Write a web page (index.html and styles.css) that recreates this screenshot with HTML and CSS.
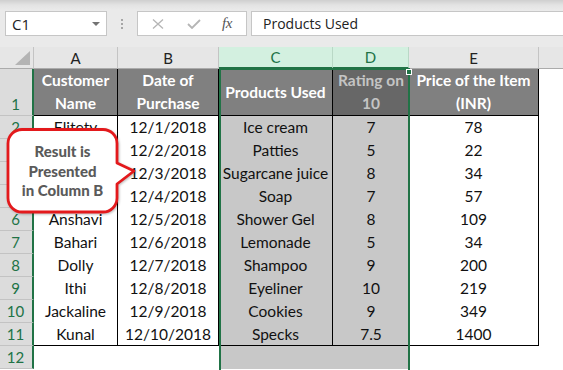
FILE: index.html
```html
<!DOCTYPE html>
<html>
<head>
<meta charset="utf-8">
<link rel="stylesheet" href="styles.css">
</head>
<body>
<div class="app">
  <div class="topbar">
    <div class="namebox"><span>C1</span><span class="dropdown"></span></div>
    <div class="grip"><i></i><i></i><i></i></div>
    <div class="fxbox">
      <svg class="ico-x" width="12" height="10" viewBox="0 0 12 10"><path d="M1 0.5 L11 9.5 M11 0.5 L1 9.5" stroke="#b5b5b5" stroke-width="1.3" fill="none"/></svg>
      <svg class="ico-check" width="14" height="10" viewBox="0 0 14 10"><path d="M1 5 L5 9 L13 1" stroke="#b5b5b5" stroke-width="1.8" fill="none"/></svg>
      <span class="fx">fx</span>
    </div>
    <div class="formula">Products Used</div>
  </div>

  <div class="sheet">
    <div class="ch corner"><span class="tri"></span></div>
    <div class="ch">A</div>
    <div class="ch">B</div>
    <div class="ch sel">C</div>
    <div class="ch sel">D</div>
    <div class="ch">E</div>
    <div class="ch last"></div>

    <div class="rh">1</div>
    <div class="c hd bl bb">Customer<br>Name</div>
    <div class="c hd bl bb">Date of<br>Purchase</div>
    <div class="c hd bl bb">Products Used</div>
    <div class="c hd dim bb">Rating on<br>10</div>
    <div class="c hd bl bb">Price of the Item<br>(INR)</div>
    <div class="c"></div>

    <div class="rh">2</div>
    <div class="c bl">Elitety</div>
    <div class="c bl">12/1/2018</div>
    <div class="c g bl">Ice cream</div>
    <div class="c g">7</div>
    <div class="c bl">78</div>
    <div class="c"></div>

    <div class="rh">3</div>
    <div class="c bl"></div>
    <div class="c bl">12/2/2018</div>
    <div class="c g bl">Patties</div>
    <div class="c g">5</div>
    <div class="c bl">22</div>
    <div class="c"></div>

    <div class="rh">4</div>
    <div class="c bl"></div>
    <div class="c bl">12/3/2018</div>
    <div class="c g bl">Sugarcane juice</div>
    <div class="c g">8</div>
    <div class="c bl">34</div>
    <div class="c"></div>

    <div class="rh">5</div>
    <div class="c bl"></div>
    <div class="c bl">12/4/2018</div>
    <div class="c g bl">Soap</div>
    <div class="c g">7</div>
    <div class="c bl">57</div>
    <div class="c"></div>

    <div class="rh">6</div>
    <div class="c bl">Anshavi</div>
    <div class="c bl">12/5/2018</div>
    <div class="c g bl">Shower Gel</div>
    <div class="c g">8</div>
    <div class="c bl">109</div>
    <div class="c"></div>

    <div class="rh">7</div>
    <div class="c bl">Bahari</div>
    <div class="c bl">12/6/2018</div>
    <div class="c g bl">Lemonade</div>
    <div class="c g">5</div>
    <div class="c bl">34</div>
    <div class="c"></div>

    <div class="rh">8</div>
    <div class="c bl">Dolly</div>
    <div class="c bl">12/7/2018</div>
    <div class="c g bl">Shampoo</div>
    <div class="c g">9</div>
    <div class="c bl">200</div>
    <div class="c"></div>

    <div class="rh">9</div>
    <div class="c bl">Ithi</div>
    <div class="c bl">12/8/2018</div>
    <div class="c g bl">Eyeliner</div>
    <div class="c g">10</div>
    <div class="c bl">219</div>
    <div class="c"></div>

    <div class="rh">10</div>
    <div class="c bl">Jackaline</div>
    <div class="c bl">12/9/2018</div>
    <div class="c g bl">Cookies</div>
    <div class="c g">9</div>
    <div class="c bl">349</div>
    <div class="c"></div>

    <div class="rh">11</div>
    <div class="c bl bb">Kunal</div>
    <div class="c bl bb">12/10/2018</div>
    <div class="c g bl bb">Specks</div>
    <div class="c g bb">7.5</div>
    <div class="c bl bb">1400</div>
    <div class="c"></div>

    <div class="rh">12</div>
    <div class="c"></div>
    <div class="c"></div>
    <div class="c g"></div>
    <div class="c g"></div>
    <div class="c"></div>
    <div class="c"></div>
  </div>

  <div class="selection"><span class="handle"></span></div>

  <div class="callout">
    <svg class="bubble" width="150" height="230" viewBox="0 0 150 230">
      <path d="M22 129.5 H103 A14 14 0 0 1 117 143.5 V163 L134 171 L117 184 V198 A14 14 0 0 1 103 212 H22 A14 14 0 0 1 8 198 V143.5 A14 14 0 0 1 22 129.5 Z" fill="#ffffff" stroke="#e3191c" stroke-width="2.8" stroke-linejoin="round"/>
    </svg>
    <div class="callout-text">Result is<br>Presented<br>in Column B</div>
  </div>
</div>
</body>
</html>
```

FILE: styles.css
```css
html, body {
  margin: 0;
  padding: 0;
}
body {
  width: 563px;
  height: 370px;
  overflow: hidden;
  background: #ffffff;
  font-family: Lato, "Liberation Sans", sans-serif;
}
.app {
  position: relative;
  width: 563px;
  height: 370px;
  overflow: hidden;
}

/* ---------- formula bar ---------- */
.topbar {
  height: 47px;
  box-sizing: border-box;
  padding-top: 11px;
  display: flex;
  align-items: flex-start;
  background: linear-gradient(#cfcfcf 0px, #e3e3e3 5px, #eaeaea 10px, #eaeaea 100%);
}
.namebox {
  margin-left: 5px;
  width: 102px;
  height: 25px;
  box-sizing: border-box;
  border: 1px solid #c6c6c6;
  background: #fff;
  display: flex;
  align-items: center;
  justify-content: space-between;
  padding: 0 6px 0 6px;
  font: 15px "Open Sans", sans-serif;
  color: #222;
}
.dropdown {
  width: 0;
  height: 0;
  border-left: 4px solid transparent;
  border-right: 4px solid transparent;
  border-top: 4px solid #737373;
}
.grip {
  width: 30px;
  display: flex;
  flex-direction: column;
  align-items: center;
  gap: 2px;
  padding-top: 8px;
}
.grip i {
  display: block;
  width: 2px;
  height: 2px;
  background: #a6a6a6;
}
.fxbox {
  width: 110px;
  height: 25px;
  box-sizing: border-box;
  border: 1px solid #c6c6c6;
  background: #fff;
  display: flex;
  align-items: center;
  padding-left: 14px;
}
.ico-x { margin-right: 23px; }
.ico-check { margin-right: 21px; }
.fx {
  font: italic 15px "Liberation Serif", serif;
  color: #555;
  letter-spacing: -0.5px;
}
.formula {
  margin-left: 4px;
  flex: 1;
  height: 25px;
  box-sizing: border-box;
  border: 1px solid #c6c6c6;
  border-right: none;
  background: #fff;
  padding-left: 11px;
  font: 14px "Open Sans", sans-serif;
  line-height: 23px;
  color: #222;
}

/* ---------- sheet grid ---------- */
.sheet {
  display: grid;
  grid-template-columns: 34px 84px 101px 114px 76px 130px 24px;
  grid-template-rows: 22px 47px repeat(10, 23px) 23px 23px;
  font-size: 15.5px;
  color: #111;
}
.ch {
  background: #e6e6e6;
  border-right: 1px solid #c4c4c4;
  border-bottom: 1px solid #ababab;
  display: flex;
  align-items: center;
  justify-content: center;
  font-size: 15px;
  color: #222;
  box-sizing: border-box;
}
.ch.sel {
  background: #d3f0e0;
  color: #217346;
  border-bottom: 2px solid #217346;
  border-right-color: #b9d8c6;
}
.ch.last { border-right: none; }
.corner {
  position: relative;
}
.tri {
  position: absolute;
  right: 3px;
  bottom: 3px;
  width: 0;
  height: 0;
  border-left: 15px solid transparent;
  border-bottom: 14px solid #b4b4b4;
}
.rh {
  background: #dcdcdc;
  color: #217346;
  border-right: 2px solid #217346;
  border-bottom: 1px solid #c3c3c3;
  box-sizing: border-box;
  display: flex;
  align-items: flex-end;
  justify-content: center;
  font-size: 15px;
  line-height: 22px;
  padding-right: 1px;
}
.c {
  box-sizing: border-box;
  display: flex;
  align-items: center;
  justify-content: center;
  text-align: center;
  line-height: 23px;
  white-space: nowrap;
  background: #fff;
}
.c.g { background: #c8c8c8; }
.c.hd {
  background: #808080;
  color: #fff;
  font-weight: 700;
}
.c.hd.dim {
  background: #676767;
  color: #c4c4c4;
}
.bl { border-right: 1px solid #000; }
.bb { border-bottom: 1px solid #000; }

/* ---------- selection overlay ---------- */
.selection {
  position: absolute;
  left: 219px;
  top: 68px;
  width: 191px;
  height: 320px;
  box-sizing: border-box;
  border: 2px solid #217346;
  border-bottom: none;
}
.handle {
  position: absolute;
  right: -4px;
  top: -1px;
  width: 4px;
  height: 4px;
  background: #217346;
  border: 1px solid #fff;
}

/* ---------- callout ---------- */
.callout {
  position: absolute;
  left: 0;
  top: 0;
  width: 150px;
  height: 230px;
}
.bubble {
  position: absolute;
  left: 0;
  top: 0;
  filter: drop-shadow(1px 1px 1px rgba(0,0,0,0.25));
}
.callout-text {
  position: absolute;
  left: 8px;
  top: 142px;
  width: 109px;
  text-align: center;
  font-weight: 900;
  font-size: 15px;
  line-height: 19.5px;
  color: #5a5a5a;
}
```
